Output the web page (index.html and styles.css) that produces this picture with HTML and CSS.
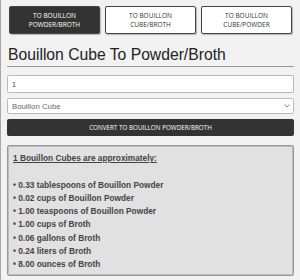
FILE: index.html
```html
<!DOCTYPE html>
<html lang="en">
<head>
  <meta charset="UTF-8">
  <meta name="viewport" content="width=device-width, initial-scale=1.0">
  <title>Bouillon Cube To Powder/Broth</title>
  <link rel="stylesheet" href="styles.css">
</head>
<body>
  <div class="tabs">
    <button class="tab active">TO BOUILLON<br>POWDER/BROTH</button>
    <button class="tab">TO BOUILLON<br>CUBE/BROTH</button>
    <button class="tab">TO BOUILLON<br>CUBE/POWDER</button>
  </div>

  <div class="container">
    <h1>Bouillon Cube To Powder/Broth</h1>

    <form id="convertForm">
      <input type="text" id="amount" value="1">
      <div class="select-wrap">
        <select id="unit">
          <option value="cube">Bouillon Cube</option>
        </select>
        <svg class="chevron" width="6" height="4" viewBox="0 0 6 4"><path d="M0.5 0.5 L3 3 L5.5 0.5" fill="none" stroke="#888" stroke-width="1"/></svg>
      </div>
      <button type="submit" class="convert">CONVERT TO BOUILLON POWDER/BROTH</button>
    </form>

    <!-- Résultat -->
    <div class="result">
      <div class="result-title">1 Bouillon Cubes are approximately:</div>
      <br>
      <div>&bull; 0.33 tablespoons of Bouillon Powder</div>
      <div>&bull; 0.02 cups of Bouillon Powder</div>
      <div>&bull; 1.00 teaspoons of Bouillon Powder</div>
      <div>&bull; 1.00 cups of Broth</div>
      <div>&bull; 0.06 gallons of Broth</div>
      <div>&bull; 0.24 liters of Broth</div>
      <div>&bull; 8.00 ounces of Broth</div>
    </div>
  </div>
</body>
</html>
```

FILE: styles.css
```css
body {
  font-family: 'Liberation Sans', Arial, sans-serif;
  background-color: #f2f2f2;
  margin: 0;
  padding: 0;
  border-left: 1px solid #a8a8a8;
  color: #333;
  height: 280px;
  box-sizing: border-box;
}
.tabs {
  display: grid;
  grid-template-columns: 1fr 1fr 1fr;
  gap: 5px;
  padding: 6px 8px 0 8px;
}
.tab {
  height: 28px;
  font-family: 'Open Sans', sans-serif;
  font-size: 6.5px;
  line-height: 9px;
  color: #333;
  background-color: #fff;
  border: 1px solid #444;
  border-radius: 2px;
  box-shadow: 1px 1px 1px rgba(0, 0, 0, 0.25);
  padding: 0;
}
.tab.active {
  background-color: #333;
  color: #fff;
}
.container {
  padding: 0 6px;
}
h1 {
  font-size: 15.7px;
  font-weight: normal;
  color: #222;
  margin: 12px 0 0 0;
  padding: 0 0 3px 1px;
  border-bottom: 1px solid #999;
  line-height: 17px;
}
form {
  display: flex;
  flex-direction: column;
  gap: 5px;
  margin-top: 8px;
}
input, select {
  font-family: 'Liberation Sans', Arial, sans-serif;
  font-size: 7.2px;
  border: 1px solid #bbb;
  border-radius: 2px;
  background-color: #fff;
  box-sizing: border-box;
  width: 100%;
}
input {
  height: 18px;
  padding: 0 4px;
  color: #444;
}
.select-wrap {
  position: relative;
}
select {
  height: 16px;
  padding: 0 4px;
  font-size: 7.8px;
  color: #666;
  appearance: none;
  display: block;
}
.chevron {
  position: absolute;
  right: 4px;
  top: 6px;
}
.convert {
  height: 17px;
  font-family: 'Open Sans', sans-serif;
  font-size: 6.3px;
  color: #fff;
  background-color: #333;
  border: none;
  border-radius: 2px;
  padding: 0;
}
.result {
  margin-top: 9px;
  background-color: #e1e1e1;
  border: 1px solid #999;
  box-shadow: inset 0 0 0 1px #bdbdbd;
  border-radius: 2px;
  padding: 6px 5px 3px 5px;
  font-size: 8.3px;
  font-weight: bold;
  line-height: 13.3px;
  color: #444;
}
.result-title {
  text-decoration: underline;
}
```
